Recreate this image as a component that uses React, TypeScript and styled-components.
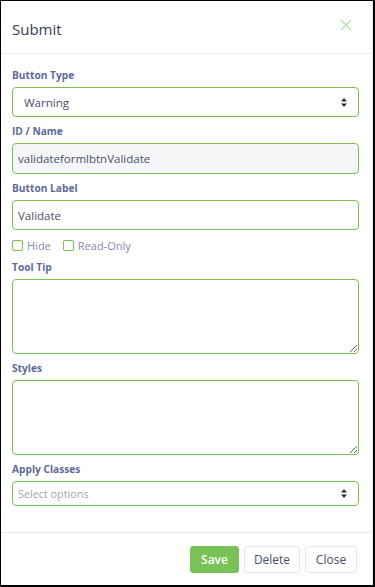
import React from "react";
import styled, { createGlobalStyle } from "styled-components";

const GlobalStyle = createGlobalStyle`
  html, body { margin: 0; padding: 0; background: #ffffff; }
  body { font-family: "Open Sans", "Liberation Sans", sans-serif; }
  * { box-sizing: border-box; }
`;

const Frame = styled.div`
  width: 375px;
  height: 587px;
  border-style: solid;
  border-color: #000000;
  border-width: 1px 2px 2px 1px;
  background: #ffffff;
  overflow: hidden;
`;

const Modal = styled.div`
  height: 100%;
  border-right: 1px solid #e4e4e4;
  display: flex;
  flex-direction: column;
`;

const Header = styled.div`
  height: 53px;
  flex: 0 0 auto;
  border-bottom: 1px solid #e9ecef;
  display: flex;
  align-items: center;
  justify-content: space-between;
  padding: 0 20px 0 11px;
`;

const Title = styled.h5`
  margin: 0;
  font-size: 15px;
  font-weight: 500;
  color: #3b3b58;
  padding-top: 3px;
`;

const CloseX = styled.button`
  border: 0;
  background: transparent;
  padding: 0;
  width: 12px;
  height: 12px;
  display: flex;
  margin-top: -4px;
  cursor: pointer;
`;

const Body = styled.div`
  flex: 1 1 auto;
  padding: 13px 13px 0 11px;
`;

const Group = styled.div<{ $last?: boolean }>`
  margin-bottom: ${(p) => (p.$last ? 0 : 6)}px;
`;

const Label = styled.label`
  display: block;
  font-size: 10.2px;
  font-weight: 700;
  line-height: 16px;
  color: #5d6a98;
  margin-bottom: 4px;
`;

const field = `
  width: 100%;
  border: 1px solid #79c24e;
  border-radius: 4px;
  font-family: inherit;
  color: #4a4e68;
  outline: none;
`;

const SelectBox = styled.div<{ $h: number; $pad: number; $placeholder?: boolean }>`
  ${field}
  height: ${(p) => p.$h}px;
  display: flex;
  align-items: center;
  justify-content: space-between;
  padding: 0 11px 0 ${(p) => p.$pad}px;
  font-size: ${(p) => (p.$placeholder ? 10.8 : 11.5)}px;
  color: ${(p) => (p.$placeholder ? "#a2a4ad" : "#4a4e68")};
`;

const TextInput = styled.input<{ $h: number; $readonly?: boolean }>`
  ${field}
  display: block;
  height: ${(p) => p.$h}px;
  padding: 0 5px;
  font-size: 11.5px;
  background: ${(p) => (p.$readonly ? "#f5f6f8" : "#ffffff")};
`;

const TextArea = styled.textarea`
  ${field}
  display: block;
  height: 75px;
  resize: vertical;
  padding: 5px;
  font-size: 11.5px;
  margin: 0;
`;

const CheckRow = styled.div`
  height: 16px;
  margin-top: 7px;
  margin-bottom: 6px;
  display: flex;
  align-items: center;
  gap: 12px;
`;

const CheckItem = styled.label`
  display: flex;
  align-items: center;
  gap: 4px;
  font-size: 11px;
  color: #8489ad;
`;

const Box = styled.span`
  width: 11px;
  height: 11px;
  border: 1px solid #79c24e;
  border-radius: 2px;
  display: inline-block;
`;

const Footer = styled.div`
  flex: 0 0 auto;
  border-top: 1px solid #e9ecef;
  display: flex;
  justify-content: flex-end;
  gap: 5px;
  padding: 13px 15px 12px 0;
`;

const Btn = styled.button<{ $primary?: boolean; $w: number }>`
  width: ${(p) => p.$w}px;
  height: 27px;
  border-radius: 3px;
  font-family: inherit;
  font-size: 12px;
  font-weight: ${(p) => (p.$primary ? 600 : 400)};
  border: 1px solid ${(p) => (p.$primary ? "#78c257" : "#e3e5ea")};
  background: ${(p) => (p.$primary ? "#78c257" : "#ffffff")};
  color: ${(p) => (p.$primary ? "#ffffff" : "#4a4e68")};
  padding: 0;
  cursor: pointer;
`;

const Arrows = () => (
  <svg width="6" height="9" viewBox="0 0 6 9">
    <path d="M3 0 L6 3.4 H0 Z" fill="#2d2d3a" />
    <path d="M3 9 L6 5.6 H0 Z" fill="#2d2d3a" />
  </svg>
);

export default function App() {
  return (
    <>
      <GlobalStyle />
      <Frame>
        <Modal>
          <Header>
            <Title>Submit</Title>
            <CloseX aria-label="close">
              <svg width="12" height="12" viewBox="0 0 12 12">
                <path d="M1 1 L11 11 M11 1 L1 11" stroke="#bde3ab" strokeWidth="1.6" />
              </svg>
            </CloseX>
          </Header>
          <Body>
            <Group>
              <Label>Button Type</Label>
              <SelectBox $h={30} $pad={11}>
                <span>Warning</span>
                <Arrows />
              </SelectBox>
            </Group>
            <Group>
              <Label>ID / Name</Label>
              <TextInput $h={31} $readonly readOnly value="validateformlbtnValidate" />
            </Group>
            <Group $last>
              <Label>Button Label</Label>
              <TextInput $h={30} readOnly value="Validate" />
            </Group>
            <CheckRow>
              <CheckItem>
                <Box />
                Hide
              </CheckItem>
              <CheckItem>
                <Box />
                Read-Only
              </CheckItem>
            </CheckRow>
            <Group>
              <Label>Tool Tip</Label>
              <TextArea />
            </Group>
            <Group>
              <Label>Styles</Label>
              <TextArea />
            </Group>
            <Group>
              <Label>Apply Classes</Label>
              <SelectBox $h={25} $pad={5} $placeholder>
                <span>Select options</span>
                <Arrows />
              </SelectBox>
            </Group>
          </Body>
          <Footer>
            <Btn $primary $w={49}>Save</Btn>
            <Btn $w={56}>Delete</Btn>
            <Btn $w={52}>Close</Btn>
          </Footer>
        </Modal>
      </Frame>
    </>
  );
}
